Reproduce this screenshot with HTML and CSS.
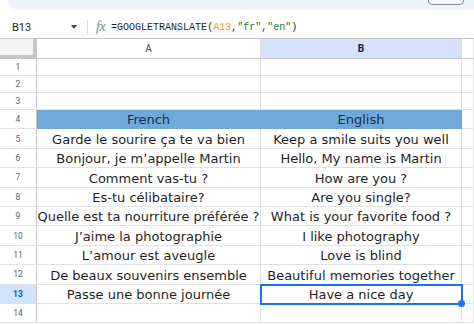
FILE: index.html
```html
<!DOCTYPE html>
<html lang="en">
<head>
    <meta charset="UTF-8">
    <title>Translate sheet</title>
    <link rel="stylesheet" href="styles.css">
</head>
<body>
    <div class="toolbar">
        <span class="tool-btn"></span>
    </div>

    <div class="formula-bar">
        <div class="name-box">B13</div>
        <span class="caret"></span>
        <span class="divider"></span>
        <span class="fx">fx</span>
        <div class="formula">=GOOGLETRANSLATE(<span class="ref">A13</span>,<span class="str">"fr"</span>,<span class="str">"en"</span>)</div>
    </div>

    <div class="sheet">
        <div class="corner"></div>
        <div class="hd">A</div>
        <div class="hd hd-sel">B</div>
        <div class="hd"></div>

        <div class="rh">1</div><div class="c"></div><div class="c"></div><div class="c"></div>
        <div class="rh">2</div><div class="c"></div><div class="c"></div><div class="c"></div>
        <div class="rh">3</div><div class="c"></div><div class="c"></div><div class="c"></div>

        <div class="rh">4</div>
        <div class="c title">French</div>
        <div class="c title">English</div>
        <div class="c"></div>

        <div class="rh">5</div>
        <div class="c">Garde le sourire ça te va bien</div>
        <div class="c">Keep a smile suits you well</div>
        <div class="c"></div>

        <div class="rh">6</div>
        <div class="c">Bonjour, je m’appelle Martin</div>
        <div class="c">Hello, My name is Martin</div>
        <div class="c"></div>

        <div class="rh">7</div>
        <div class="c">Comment vas-tu ?</div>
        <div class="c">How are you ?</div>
        <div class="c"></div>

        <div class="rh">8</div>
        <div class="c">Es-tu célibataire?</div>
        <div class="c">Are you single?</div>
        <div class="c"></div>

        <div class="rh">9</div>
        <div class="c">Quelle est ta nourriture préférée ?</div>
        <div class="c">What is your favorite food ?</div>
        <div class="c"></div>

        <div class="rh">10</div>
        <div class="c">J’aime la photographie</div>
        <div class="c">I like photography</div>
        <div class="c"></div>

        <div class="rh">11</div>
        <div class="c">L’amour est aveugle</div>
        <div class="c">Love is blind</div>
        <div class="c"></div>

        <div class="rh">12</div>
        <div class="c">De beaux souvenirs ensemble</div>
        <div class="c">Beautiful memories together</div>
        <div class="c"></div>

        <div class="rh rh-sel">13</div>
        <div class="c">Passe une bonne journée</div>
        <div class="c active">Have a nice day</div>
        <div class="c"></div>

        <div class="rh">14</div><div class="c"></div><div class="c"></div><div class="c"></div>
    </div>
</body>
</html>
```

FILE: styles.css
```css
body {
    margin: 0;
    width: 474px;
    height: 324px;
    overflow: hidden;
    background-color: white;
    font-family: Roboto, "Noto Sans", sans-serif;
}

/* top toolbar, only its lower edge is visible */
.toolbar {
    height: 10px;
    margin: 0 0 0 8px;
    background-color: #edf2fa;
    border-radius: 0 0 0 12px;
    display: flex;
    justify-content: flex-end;
}
.tool-btn {
    width: 34px;
    height: 12px;
    margin-top: -9px;
    margin-right: 10px;
    border: 1px solid #8a8d8c;
    border-radius: 4px;
    background-color: #f4f7fc;
}

/* name box + formula */
.formula-bar {
    height: 28px;
    box-sizing: border-box;
    padding-top: 6px;
    display: flex;
    align-items: center;
}
.name-box {
    width: 48px;
    padding-left: 12px;
    font-size: 11px;
    color: #1f1f1f;
}
.caret {
    width: 0;
    height: 0;
    margin-left: 11px;
    border-left: 3px solid transparent;
    border-right: 3px solid transparent;
    border-top: 4px solid #444;
}
.divider {
    width: 1px;
    height: 15px;
    margin-left: 10px;
    background-color: #dadce0;
}
.fx {
    margin-left: 8px;
    font-family: "Liberation Serif", serif;
    font-style: italic;
    font-size: 14px;
    color: #80868b;
    letter-spacing: -0.5px;
}
.formula {
    margin-left: 6px;
    font-family: "Liberation Mono", monospace;
    font-size: 10px;
    color: #1f1f1f;
    white-space: nowrap;
}
.ref {
    color: #e8a010;
}
.str {
    color: #188038;
}

/* grid */
.sheet {
    display: grid;
    grid-template-columns: 37px 224px 201px 12px;
    grid-template-rows: 20px 17px 17px 17px repeat(11, 19.4px);
    border-top: 1px solid #c7c7c7;
}
.sheet > div {
    box-sizing: border-box;
    border-right: 1px solid #e1e1e1;
    border-bottom: 1px solid #e1e1e1;
}
.corner {
    background-color: #f3f3f3;
    border-right: 4px solid #c4c7c5 !important;
    border-bottom: 4px solid #c4c7c5 !important;
}
.hd {
    display: flex;
    align-items: center;
    justify-content: center;
    font-size: 10px;
    color: #444;
    border-bottom-color: #c7c7c7 !important;
}
.hd-sel {
    background-color: #d3e3fd;
    color: #041e49;
    font-weight: bold;
}
.rh {
    display: flex;
    align-items: center;
    justify-content: center;
    font-size: 8.5px;
    color: #5f6368;
    border-right-color: #c7c7c7 !important;
}
.rh-sel {
    background-color: #d3e3fd;
    color: #0b57d0;
    font-weight: bold;
}
.c {
    display: flex;
    align-items: flex-end;
    justify-content: center;
    overflow: hidden;
    white-space: nowrap;
    font-family: "DejaVu Sans", Verdana, sans-serif;
    font-size: 13px;
    line-height: 17px;
    color: #1f1f1f;
}
.title {
    background-color: #6fa8dc;
    border-color: #6fa8dc !important;
    color: #1c2e44;
}
.active {
    position: relative;
    overflow: visible;
    outline: 2px solid #1a73e8;
    outline-offset: -1px;
}
.active::after {
    content: "";
    position: absolute;
    right: -4px;
    bottom: -4px;
    width: 7px;
    height: 7px;
    border-radius: 50%;
    background-color: #1a73e8;
}
```
